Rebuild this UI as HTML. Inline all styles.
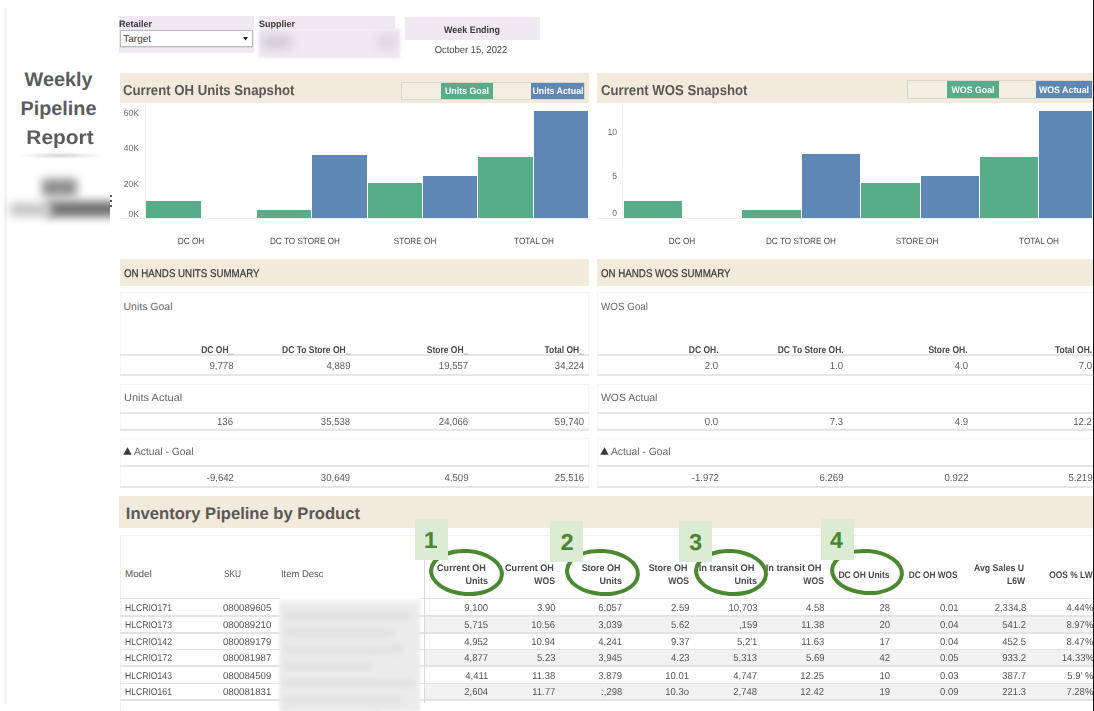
<!DOCTYPE html>
<html><head><meta charset="utf-8"><style>
html,body{margin:0;padding:0;background:#fff;width:1094px;height:711px;overflow:hidden}
body{position:relative;font-family:"Liberation Sans",sans-serif;text-rendering:geometricPrecision}
div,span,svg{position:absolute}
.t{white-space:nowrap}
</style></head><body>
<div style="left:4.0px;top:8.0px;width:2.5px;height:696.0px;background:#f5f5f5"></div>
<span class="t" style="left:-241.50px;width:600px;text-align:center;top:71px;font-size:19.8px;line-height:19.8px;color:#5a5b5e;font-weight:700;transform-origin:center center">Weekly</span>
<span class="t" style="left:-241.50px;width:600px;text-align:center;top:100px;font-size:19.8px;line-height:19.8px;color:#5a5b5e;font-weight:700;transform-origin:center center">Pipeline</span>
<span class="t" style="left:-239.70px;width:600px;text-align:center;top:129px;font-size:19.8px;line-height:19.8px;color:#5a5b5e;font-weight:700;transform:scaleX(1.055);transform-origin:center center">Report</span>
<div style="left:18.0px;top:152.0px;width:86.0px;height:7.0px;background:radial-gradient(ellipse at center,rgba(200,200,200,0.75) 0%,rgba(255,255,255,0) 70%)"></div>
<div style="left:0;top:160px;width:110px;height:80px;overflow:hidden"><div style="left:42px;top:19px;width:35px;height:17px;background:#8c8c8c;filter:blur(5px)"></div><div style="left:47px;top:41px;width:72px;height:16px;background:#737373;filter:blur(4.5px)"></div><div style="left:10px;top:43px;width:42px;height:13px;background:#c4c4c4;filter:blur(5px)"></div></div>
<div style="left:110.3px;top:194.5px;width:2.0px;height:2.0px;background:#222;border-radius:50%"></div>
<div style="left:110.3px;top:199.5px;width:2.0px;height:2.0px;background:#222;border-radius:50%"></div>
<div style="left:110.3px;top:204.5px;width:2.0px;height:2.0px;background:#222;border-radius:50%"></div>
<div style="left:119.0px;top:16.0px;width:135.0px;height:37.0px;background:#efe9f1"></div>
<span class="t" style="left:119.20px;top:20px;font-size:9.3px;line-height:9.3px;color:#3a3a3a;font-weight:700;transform:scaleX(0.97);transform-origin:left center">Retailer</span>
<div style="left:119.5px;top:30.0px;width:133.5px;height:17.0px;background:#fff;border:1px solid #bdb7bf;box-sizing:border-box;box-shadow:0 1px 1px rgba(0,0,0,0.08)"></div>
<span class="t" style="left:123.30px;top:35px;font-size:10px;line-height:10px;color:#3a3a3a;font-weight:400;transform-origin:left center">Target</span>
<svg style="position:absolute;left:243px;top:36.5px" width="5" height="4"><path d="M0 0H5L2.5 3.5Z" fill="#222"/></svg>
<div style="left:259.0px;top:16.0px;width:136.0px;height:13.0px;background:#efe9f1"></div>
<span class="t" style="left:259.00px;top:20px;font-size:9.3px;line-height:9.3px;color:#3a3a3a;font-weight:700;transform:scaleX(0.97);transform-origin:left center">Supplier</span>
<div style="left:259.0px;top:29.0px;width:141.0px;height:28.5px;background:#efe9f1;filter:blur(1px)"></div>
<div style="left:262.0px;top:35.0px;width:30.0px;height:14.0px;background:#d3ced5;filter:blur(5px)"></div>
<div style="left:377.0px;top:35.0px;width:20.0px;height:14.0px;background:#dcd7de;filter:blur(5px)"></div>
<div style="left:404.5px;top:17.4px;width:135.2px;height:22.6px;background:#efe9f1"></div>
<span class="t" style="left:172.00px;width:600px;text-align:center;top:26px;font-size:9.6px;line-height:9.6px;color:#3a3a3a;font-weight:700;transform:scaleX(0.93);transform-origin:center center">Week Ending</span>
<span class="t" style="left:171.20px;width:600px;text-align:center;top:46px;font-size:10px;line-height:10px;color:#444;font-weight:400;transform:scaleX(0.94);transform-origin:center center">October 15, 2022</span>
<div style="left:119.5px;top:73.0px;width:469.5px;height:29.5px;background:#f2eada"></div>
<span class="t" style="left:123.20px;top:84px;font-size:14.4px;line-height:14.4px;color:#58585b;font-weight:700;transform:scaleX(0.916);transform-origin:left center">Current OH Units Snapshot</span>
<div style="left:401.0px;top:82.3px;width:183.5px;height:17.5px;background:#f3eee2;border:1px solid #d9d6d0;box-sizing:border-box"></div>
<div style="left:440.8px;top:82.8px;width:52.2px;height:16.5px;background:#57ad88"></div>
<div style="left:530.6px;top:82.8px;width:53.9px;height:16.5px;background:#5f87b6"></div>
<span class="t" style="left:166.90px;width:600px;text-align:center;top:86px;font-size:9.4px;line-height:9.4px;color:#fff;font-weight:700;transform:scaleX(0.94);transform-origin:center center">Units Goal</span>
<span class="t" style="left:257.55px;width:600px;text-align:center;top:86px;font-size:9.4px;line-height:9.4px;color:#fff;font-weight:700;transform:scaleX(0.94);transform-origin:center center">Units Actual</span>
<div style="left:596.7px;top:73.0px;width:497.3px;height:29.5px;background:#f2eada"></div>
<span class="t" style="left:600.60px;top:84px;font-size:14.4px;line-height:14.4px;color:#58585b;font-weight:700;transform:scaleX(0.916);transform-origin:left center">Current WOS Snapshot</span>
<div style="left:907.3px;top:80.4px;width:184.7px;height:18.6px;background:#f3eee2;border:1px solid #d9d6d0;box-sizing:border-box"></div>
<div style="left:947.0px;top:80.9px;width:51.5px;height:17.6px;background:#57ad88"></div>
<div style="left:1036.0px;top:80.9px;width:56.0px;height:17.6px;background:#5f87b6"></div>
<span class="t" style="left:672.75px;width:600px;text-align:center;top:85px;font-size:9.4px;line-height:9.4px;color:#fff;font-weight:700;transform:scaleX(0.94);transform-origin:center center">WOS Goal</span>
<span class="t" style="left:764.00px;width:600px;text-align:center;top:85px;font-size:9.4px;line-height:9.4px;color:#fff;font-weight:700;transform:scaleX(0.94);transform-origin:center center">WOS Actual</span>
<div style="left:144.5px;top:103.0px;width:1.0px;height:115.0px;background:#f2f2f2"></div>
<div style="left:120.0px;top:218.0px;width:469.0px;height:1.0px;background:#efefef"></div>
<span class="t" style="right:954.50px;top:109px;font-size:9px;line-height:9px;color:#6a6a6a;font-weight:400;transform:scaleX(0.95);transform-origin:right center">60K</span>
<span class="t" style="right:954.50px;top:144px;font-size:9px;line-height:9px;color:#6a6a6a;font-weight:400;transform:scaleX(0.95);transform-origin:right center">40K</span>
<span class="t" style="right:954.50px;top:180px;font-size:9px;line-height:9px;color:#6a6a6a;font-weight:400;transform:scaleX(0.95);transform-origin:right center">20K</span>
<span class="t" style="right:954.50px;top:210px;font-size:9px;line-height:9px;color:#6a6a6a;font-weight:400;transform:scaleX(0.95);transform-origin:right center">0K</span>
<div style="left:146.0px;top:201.2px;width:54.6px;height:16.8px;background:#57ad88"></div>
<div style="left:256.8px;top:210.3px;width:54.6px;height:7.7px;background:#57ad88"></div>
<div style="left:312.1px;top:154.6px;width:54.6px;height:63.4px;background:#5f87b6"></div>
<div style="left:367.5px;top:183.4px;width:54.6px;height:34.6px;background:#57ad88"></div>
<div style="left:422.9px;top:175.9px;width:54.6px;height:42.1px;background:#5f87b6"></div>
<div style="left:478.2px;top:157.3px;width:54.6px;height:60.7px;background:#57ad88"></div>
<div style="left:533.6px;top:110.6px;width:54.6px;height:107.4px;background:#5f87b6"></div>
<span class="t" style="left:-109.30px;width:600px;text-align:center;top:237px;font-size:9px;line-height:9px;color:#4a4a4a;font-weight:400;transform:scaleX(0.91);transform-origin:center center">DC OH</span>
<span class="t" style="left:4.80px;width:600px;text-align:center;top:237px;font-size:9px;line-height:9px;color:#4a4a4a;font-weight:400;transform:scaleX(0.91);transform-origin:center center">DC TO STORE OH</span>
<span class="t" style="left:115.40px;width:600px;text-align:center;top:237px;font-size:9px;line-height:9px;color:#4a4a4a;font-weight:400;transform:scaleX(0.91);transform-origin:center center">STORE OH</span>
<span class="t" style="left:233.90px;width:600px;text-align:center;top:237px;font-size:9px;line-height:9px;color:#4a4a4a;font-weight:400;transform:scaleX(0.91);transform-origin:center center">TOTAL OH</span>
<div style="left:622.2px;top:103.0px;width:1.0px;height:115.0px;background:#f2f2f2"></div>
<div style="left:597.0px;top:218.0px;width:497.0px;height:1.0px;background:#efefef"></div>
<span class="t" style="right:476.50px;top:128px;font-size:9px;line-height:9px;color:#6a6a6a;font-weight:400;transform:scaleX(0.95);transform-origin:right center">10</span>
<span class="t" style="right:476.50px;top:172px;font-size:9px;line-height:9px;color:#6a6a6a;font-weight:400;transform:scaleX(0.95);transform-origin:right center">5</span>
<span class="t" style="right:476.50px;top:209px;font-size:9px;line-height:9px;color:#6a6a6a;font-weight:400;transform:scaleX(0.95);transform-origin:right center">0</span>
<div style="left:623.5px;top:201.0px;width:58.6px;height:17.0px;background:#57ad88"></div>
<div style="left:742.3px;top:210.4px;width:58.6px;height:7.6px;background:#57ad88"></div>
<div style="left:801.7px;top:154.3px;width:58.6px;height:63.7px;background:#5f87b6"></div>
<div style="left:861.1px;top:183.1px;width:58.6px;height:34.9px;background:#57ad88"></div>
<div style="left:920.5px;top:176.0px;width:58.6px;height:42.0px;background:#5f87b6"></div>
<div style="left:979.9px;top:156.9px;width:58.6px;height:61.1px;background:#57ad88"></div>
<div style="left:1039.3px;top:111.0px;width:53.2px;height:107.0px;background:#5f87b6"></div>
<span class="t" style="left:381.70px;width:600px;text-align:center;top:237px;font-size:9px;line-height:9px;color:#4a4a4a;font-weight:400;transform:scaleX(0.91);transform-origin:center center">DC OH</span>
<span class="t" style="left:500.60px;width:600px;text-align:center;top:237px;font-size:9px;line-height:9px;color:#4a4a4a;font-weight:400;transform:scaleX(0.91);transform-origin:center center">DC TO STORE OH</span>
<span class="t" style="left:616.50px;width:600px;text-align:center;top:237px;font-size:9px;line-height:9px;color:#4a4a4a;font-weight:400;transform:scaleX(0.91);transform-origin:center center">STORE OH</span>
<span class="t" style="left:739.00px;width:600px;text-align:center;top:237px;font-size:9px;line-height:9px;color:#4a4a4a;font-weight:400;transform:scaleX(0.91);transform-origin:center center">TOTAL OH</span>
<div style="left:119.5px;top:259.0px;width:469.5px;height:26.5px;background:#f2eada"></div>
<span class="t" style="left:123.70px;top:269px;font-size:11.2px;line-height:11.2px;color:#3a3a3a;font-weight:400;-webkit-text-stroke:0.25px currentColor;transform:scaleX(0.87);transform-origin:left center">ON HANDS UNITS SUMMARY</span>
<div style="left:119.5px;top:292.2px;width:469.5px;height:82.9px;border:1px solid #f6f6f6;box-sizing:border-box"></div>
<span class="t" style="left:123.50px;top:302px;font-size:10.5px;line-height:10.5px;color:#666;font-weight:400;transform-origin:left center">Units Goal</span>
<div style="left:119.5px;top:354.4px;width:469.5px;height:2.0px;background:#e6e6e6"></div>
<span class="t" style="right:860.60px;top:346px;font-size:9.9px;line-height:9.9px;color:#4a4a4a;font-weight:700;transform:scaleX(0.86);transform-origin:right center">DC OH_</span>
<span class="t" style="right:743.60px;top:346px;font-size:9.9px;line-height:9.9px;color:#4a4a4a;font-weight:700;transform:scaleX(0.86);transform-origin:right center">DC To Store OH_</span>
<span class="t" style="right:625.80px;top:346px;font-size:9.9px;line-height:9.9px;color:#4a4a4a;font-weight:700;transform:scaleX(0.86);transform-origin:right center">Store OH_</span>
<span class="t" style="right:510.00px;top:346px;font-size:9.9px;line-height:9.9px;color:#4a4a4a;font-weight:700;transform:scaleX(0.86);transform-origin:right center">Total OH_</span>
<span class="t" style="right:860.60px;top:362px;font-size:10.2px;line-height:10.2px;color:#5c5c5c;font-weight:400;transform:scaleX(0.94);transform-origin:right center">9,778</span>
<span class="t" style="right:743.60px;top:362px;font-size:10.2px;line-height:10.2px;color:#5c5c5c;font-weight:400;transform:scaleX(0.94);transform-origin:right center">4,889</span>
<span class="t" style="right:625.80px;top:362px;font-size:10.2px;line-height:10.2px;color:#5c5c5c;font-weight:400;transform:scaleX(0.94);transform-origin:right center">19,557</span>
<span class="t" style="right:510.00px;top:362px;font-size:10.2px;line-height:10.2px;color:#5c5c5c;font-weight:400;transform:scaleX(0.94);transform-origin:right center">34,224</span>
<div style="left:119.5px;top:374.1px;width:469.5px;height:2.0px;background:#e6e6e6"></div>
<div style="left:119.5px;top:383.7px;width:469.5px;height:45.8px;border:1px solid #f6f6f6;box-sizing:border-box"></div>
<span class="t" style="left:123.50px;top:393px;font-size:10.5px;line-height:10.5px;color:#666;font-weight:400;transform:scaleX(1.05);transform-origin:left center">Units Actual</span>
<div style="left:119.5px;top:411.5px;width:469.5px;height:2.0px;background:#e6e6e6"></div>
<span class="t" style="right:860.60px;top:418px;font-size:10.2px;line-height:10.2px;color:#5c5c5c;font-weight:400;transform:scaleX(0.94);transform-origin:right center">136</span>
<span class="t" style="right:743.60px;top:418px;font-size:10.2px;line-height:10.2px;color:#5c5c5c;font-weight:400;transform:scaleX(0.94);transform-origin:right center">35,538</span>
<span class="t" style="right:625.80px;top:418px;font-size:10.2px;line-height:10.2px;color:#5c5c5c;font-weight:400;transform:scaleX(0.94);transform-origin:right center">24,066</span>
<span class="t" style="right:510.00px;top:418px;font-size:10.2px;line-height:10.2px;color:#5c5c5c;font-weight:400;transform:scaleX(0.94);transform-origin:right center">59,740</span>
<div style="left:119.5px;top:428.5px;width:469.5px;height:2.0px;background:#e6e6e6"></div>
<div style="left:119.5px;top:437.6px;width:469.5px;height:49.0px;border:1px solid #f6f6f6;box-sizing:border-box"></div>
<svg style="left:123.3px;top:447.0px" width="9" height="8"><path d="M4.5 0.3L8.7 7.8H0.3Z" fill="#3a3a3a"/></svg>
<span class="t" style="left:134.00px;top:447px;font-size:10.5px;line-height:10.5px;color:#666;font-weight:400;transform:scaleX(0.98);transform-origin:left center">Actual - Goal</span>
<div style="left:119.5px;top:465.3px;width:469.5px;height:2.0px;background:#e6e6e6"></div>
<span class="t" style="right:860.60px;top:474px;font-size:10.2px;line-height:10.2px;color:#5c5c5c;font-weight:400;transform:scaleX(0.94);transform-origin:right center">-9,642</span>
<span class="t" style="right:743.60px;top:474px;font-size:10.2px;line-height:10.2px;color:#5c5c5c;font-weight:400;transform:scaleX(0.94);transform-origin:right center">30,649</span>
<span class="t" style="right:625.80px;top:474px;font-size:10.2px;line-height:10.2px;color:#5c5c5c;font-weight:400;transform:scaleX(0.94);transform-origin:right center">4,509</span>
<span class="t" style="right:510.00px;top:474px;font-size:10.2px;line-height:10.2px;color:#5c5c5c;font-weight:400;transform:scaleX(0.94);transform-origin:right center">25,516</span>
<div style="left:119.5px;top:485.6px;width:469.5px;height:2.0px;background:#e6e6e6"></div>
<div style="left:596.6px;top:259.0px;width:497.4px;height:26.5px;background:#f2eada"></div>
<span class="t" style="left:600.80px;top:269px;font-size:11.2px;line-height:11.2px;color:#3a3a3a;font-weight:400;-webkit-text-stroke:0.25px currentColor;transform:scaleX(0.87);transform-origin:left center">ON HANDS WOS SUMMARY</span>
<div style="left:596.6px;top:292.2px;width:497.4px;height:82.9px;border:1px solid #f6f6f6;box-sizing:border-box"></div>
<span class="t" style="left:600.60px;top:302px;font-size:10.5px;line-height:10.5px;color:#666;font-weight:400;transform:scaleX(0.937);transform-origin:left center">WOS Goal</span>
<div style="left:596.6px;top:354.4px;width:497.4px;height:2.0px;background:#e6e6e6"></div>
<span class="t" style="right:375.50px;top:346px;font-size:9.9px;line-height:9.9px;color:#4a4a4a;font-weight:700;transform:scaleX(0.86);transform-origin:right center">DC OH.</span>
<span class="t" style="right:250.70px;top:346px;font-size:9.9px;line-height:9.9px;color:#4a4a4a;font-weight:700;transform:scaleX(0.86);transform-origin:right center">DC To Store OH.</span>
<span class="t" style="right:126.00px;top:346px;font-size:9.9px;line-height:9.9px;color:#4a4a4a;font-weight:700;transform:scaleX(0.86);transform-origin:right center">Store OH.</span>
<span class="t" style="right:2.00px;top:346px;font-size:9.9px;line-height:9.9px;color:#4a4a4a;font-weight:700;transform:scaleX(0.86);transform-origin:right center">Total OH.</span>
<span class="t" style="right:375.50px;top:362px;font-size:10.2px;line-height:10.2px;color:#5c5c5c;font-weight:400;transform:scaleX(0.94);transform-origin:right center">2.0</span>
<span class="t" style="right:250.70px;top:362px;font-size:10.2px;line-height:10.2px;color:#5c5c5c;font-weight:400;transform:scaleX(0.94);transform-origin:right center">1.0</span>
<span class="t" style="right:126.00px;top:362px;font-size:10.2px;line-height:10.2px;color:#5c5c5c;font-weight:400;transform:scaleX(0.94);transform-origin:right center">4.0</span>
<span class="t" style="right:2.00px;top:362px;font-size:10.2px;line-height:10.2px;color:#5c5c5c;font-weight:400;transform:scaleX(0.94);transform-origin:right center">7.0</span>
<div style="left:596.6px;top:374.1px;width:497.4px;height:2.0px;background:#e6e6e6"></div>
<div style="left:596.6px;top:383.7px;width:497.4px;height:45.8px;border:1px solid #f6f6f6;box-sizing:border-box"></div>
<span class="t" style="left:600.60px;top:393px;font-size:10.5px;line-height:10.5px;color:#666;font-weight:400;transform:scaleX(0.995);transform-origin:left center">WOS Actual</span>
<div style="left:596.6px;top:411.5px;width:497.4px;height:2.0px;background:#e6e6e6"></div>
<span class="t" style="right:375.50px;top:418px;font-size:10.2px;line-height:10.2px;color:#5c5c5c;font-weight:400;transform:scaleX(0.94);transform-origin:right center">0.0</span>
<span class="t" style="right:250.70px;top:418px;font-size:10.2px;line-height:10.2px;color:#5c5c5c;font-weight:400;transform:scaleX(0.94);transform-origin:right center">7.3</span>
<span class="t" style="right:126.00px;top:418px;font-size:10.2px;line-height:10.2px;color:#5c5c5c;font-weight:400;transform:scaleX(0.94);transform-origin:right center">4.9</span>
<span class="t" style="right:2.00px;top:418px;font-size:10.2px;line-height:10.2px;color:#5c5c5c;font-weight:400;transform:scaleX(0.94);transform-origin:right center">12.2</span>
<div style="left:596.6px;top:428.5px;width:497.4px;height:2.0px;background:#e6e6e6"></div>
<div style="left:596.6px;top:437.6px;width:497.4px;height:49.0px;border:1px solid #f6f6f6;box-sizing:border-box"></div>
<svg style="left:600.4px;top:447.0px" width="9" height="8"><path d="M4.5 0.3L8.7 7.8H0.3Z" fill="#3a3a3a"/></svg>
<span class="t" style="left:611.10px;top:447px;font-size:10.5px;line-height:10.5px;color:#666;font-weight:400;transform:scaleX(0.98);transform-origin:left center">Actual - Goal</span>
<div style="left:596.6px;top:465.3px;width:497.4px;height:2.0px;background:#e6e6e6"></div>
<span class="t" style="right:375.50px;top:474px;font-size:10.2px;line-height:10.2px;color:#5c5c5c;font-weight:400;transform:scaleX(0.94);transform-origin:right center">-1.972</span>
<span class="t" style="right:250.70px;top:474px;font-size:10.2px;line-height:10.2px;color:#5c5c5c;font-weight:400;transform:scaleX(0.94);transform-origin:right center">6.269</span>
<span class="t" style="right:126.00px;top:474px;font-size:10.2px;line-height:10.2px;color:#5c5c5c;font-weight:400;transform:scaleX(0.94);transform-origin:right center">0.922</span>
<span class="t" style="right:2.00px;top:474px;font-size:10.2px;line-height:10.2px;color:#5c5c5c;font-weight:400;transform:scaleX(0.94);transform-origin:right center">5.219</span>
<div style="left:596.6px;top:485.6px;width:497.4px;height:2.0px;background:#e6e6e6"></div>
<div style="left:119.0px;top:495.5px;width:975.0px;height:32.9px;background:#f2eada"></div>
<span class="t" style="left:125.80px;top:506px;font-size:16.6px;line-height:16.6px;color:#58585b;font-weight:700;transform-origin:left center">Inventory Pipeline by Product</span>
<div style="left:120.0px;top:534.5px;width:974.0px;height:176.5px;border-left:1px solid #efefef;border-top:1px solid #f3f3f3;box-sizing:border-box"></div>
<span class="t" style="left:125.00px;top:570px;font-size:9.8px;line-height:9.8px;color:#555;font-weight:400;transform-origin:left center">Model</span>
<span class="t" style="left:223.70px;top:570px;font-size:9.8px;line-height:9.8px;color:#555;font-weight:400;transform:scaleX(0.85);transform-origin:left center">SKU</span>
<span class="t" style="left:280.60px;top:570px;font-size:9.8px;line-height:9.8px;color:#555;font-weight:400;transform:scaleX(0.96);transform-origin:left center">Item Desc</span>
<div style="left:425.0px;top:616.5px;width:668.0px;height:16.0px;background:#f2f2f2"></div>
<div style="left:425.0px;top:650.2px;width:668.0px;height:15.5px;background:#f2f2f2"></div>
<div style="left:425.0px;top:684.2px;width:668.0px;height:15.5px;background:#f2f2f2"></div>
<div style="left:120.0px;top:597.5px;width:973.0px;height:1.5px;background:#e3e3e3"></div>
<div style="left:120.0px;top:615.0px;width:973.0px;height:1.5px;background:#e3e3e3"></div>
<div style="left:120.0px;top:632.0px;width:973.0px;height:1.5px;background:#e3e3e3"></div>
<div style="left:120.0px;top:648.7px;width:973.0px;height:1.5px;background:#e3e3e3"></div>
<div style="left:120.0px;top:665.2px;width:973.0px;height:1.5px;background:#e3e3e3"></div>
<div style="left:120.0px;top:682.7px;width:973.0px;height:1.5px;background:#e3e3e3"></div>
<div style="left:120.0px;top:699.2px;width:973.0px;height:1.5px;background:#e3e3e3"></div>
<div style="left:424.2px;top:560.0px;width:1.0px;height:143.0px;background:#d9d9d9"></div>
<span class="t" style="right:608.30px;top:564px;font-size:9.6px;line-height:9.6px;color:#4a4a4a;font-weight:700;transform:scaleX(0.939925);transform-origin:right center">Current OH</span>
<span class="t" style="right:606.50px;top:577px;font-size:9.6px;line-height:9.6px;color:#4a4a4a;font-weight:700;transform:scaleX(0.938);transform-origin:right center">Units</span>
<span class="t" style="right:540.80px;top:564px;font-size:9.6px;line-height:9.6px;color:#4a4a4a;font-weight:700;transform:scaleX(0.939925);transform-origin:right center">Current OH</span>
<span class="t" style="right:539.00px;top:577px;font-size:9.6px;line-height:9.6px;color:#4a4a4a;font-weight:700;transform:scaleX(0.9);transform-origin:right center">WOS</span>
<span class="t" style="right:473.80px;top:564px;font-size:9.6px;line-height:9.6px;color:#4a4a4a;font-weight:700;transform:scaleX(0.93685);transform-origin:right center">Store OH</span>
<span class="t" style="right:472.00px;top:577px;font-size:9.6px;line-height:9.6px;color:#4a4a4a;font-weight:700;transform:scaleX(0.938);transform-origin:right center">Units</span>
<span class="t" style="right:406.90px;top:564px;font-size:9.6px;line-height:9.6px;color:#4a4a4a;font-weight:700;transform:scaleX(0.93685);transform-origin:right center">Store OH</span>
<span class="t" style="right:405.10px;top:577px;font-size:9.6px;line-height:9.6px;color:#4a4a4a;font-weight:700;transform:scaleX(0.9);transform-origin:right center">WOS</span>
<span class="t" style="right:339.10px;top:564px;font-size:9.6px;line-height:9.6px;color:#4a4a4a;font-weight:700;transform:scaleX(0.9696499999999999);transform-origin:right center">In transit OH</span>
<span class="t" style="right:337.30px;top:577px;font-size:9.6px;line-height:9.6px;color:#4a4a4a;font-weight:700;transform:scaleX(0.938);transform-origin:right center">Units</span>
<span class="t" style="right:272.30px;top:564px;font-size:9.6px;line-height:9.6px;color:#4a4a4a;font-weight:700;transform:scaleX(0.9696499999999999);transform-origin:right center">In transit OH</span>
<span class="t" style="right:270.50px;top:577px;font-size:9.6px;line-height:9.6px;color:#4a4a4a;font-weight:700;transform:scaleX(0.9);transform-origin:right center">WOS</span>
<span class="t" style="right:204.00px;top:571px;font-size:9.6px;line-height:9.6px;color:#4a4a4a;font-weight:700;transform:scaleX(0.889);transform-origin:right center">DC OH Units</span>
<span class="t" style="right:136.50px;top:571px;font-size:9.6px;line-height:9.6px;color:#4a4a4a;font-weight:700;transform:scaleX(0.861);transform-origin:right center">DC OH WOS</span>
<span class="t" style="right:70.30px;top:564px;font-size:9.6px;line-height:9.6px;color:#4a4a4a;font-weight:700;transform:scaleX(0.911225);transform-origin:right center">Avg Sales U</span>
<span class="t" style="right:68.50px;top:577px;font-size:9.6px;line-height:9.6px;color:#4a4a4a;font-weight:700;transform:scaleX(0.9);transform-origin:right center">L6W</span>
<span class="t" style="right:1.00px;top:571px;font-size:9.6px;line-height:9.6px;color:#4a4a4a;font-weight:700;transform:scaleX(0.873);transform-origin:right center">OOS % LW</span>
<span class="t" style="left:125.00px;top:604px;font-size:9.8px;line-height:9.8px;color:#555;font-weight:400;transform:scaleX(0.88);transform-origin:left center">HLCRIO171</span>
<span class="t" style="left:223.00px;top:604px;font-size:9.8px;line-height:9.8px;color:#555;font-weight:400;transform:scaleX(0.985);transform-origin:left center">080089605</span>
<span class="t" style="right:606.00px;top:604px;font-size:10px;line-height:10px;color:#555;font-weight:400;transform:scaleX(0.95);transform-origin:right center">9,100</span>
<span class="t" style="right:538.50px;top:604px;font-size:10px;line-height:10px;color:#555;font-weight:400;transform:scaleX(0.95);transform-origin:right center">3.90</span>
<span class="t" style="right:471.50px;top:604px;font-size:10px;line-height:10px;color:#555;font-weight:400;transform:scaleX(0.95);transform-origin:right center">6,057</span>
<span class="t" style="right:404.60px;top:604px;font-size:10px;line-height:10px;color:#555;font-weight:400;transform:scaleX(0.95);transform-origin:right center">2.59</span>
<span class="t" style="right:336.80px;top:604px;font-size:10px;line-height:10px;color:#555;font-weight:400;transform:scaleX(0.95);transform-origin:right center">10,703</span>
<span class="t" style="right:270.00px;top:604px;font-size:10px;line-height:10px;color:#555;font-weight:400;transform:scaleX(0.95);transform-origin:right center">4.58</span>
<span class="t" style="right:203.50px;top:604px;font-size:10px;line-height:10px;color:#555;font-weight:400;transform:scaleX(0.95);transform-origin:right center">28</span>
<span class="t" style="right:136.00px;top:604px;font-size:10px;line-height:10px;color:#555;font-weight:400;transform:scaleX(0.95);transform-origin:right center">0.01</span>
<span class="t" style="right:68.00px;top:604px;font-size:10px;line-height:10px;color:#555;font-weight:400;transform:scaleX(0.95);transform-origin:right center">2,334.8</span>
<span class="t" style="right:0.50px;top:604px;font-size:10px;line-height:10px;color:#555;font-weight:400;transform:scaleX(0.95);transform-origin:right center">4.44%</span>
<span class="t" style="left:125.00px;top:621px;font-size:9.8px;line-height:9.8px;color:#555;font-weight:400;transform:scaleX(0.88);transform-origin:left center">HLCRIO173</span>
<span class="t" style="left:223.00px;top:621px;font-size:9.8px;line-height:9.8px;color:#555;font-weight:400;transform:scaleX(0.985);transform-origin:left center">080089210</span>
<span class="t" style="right:606.00px;top:621px;font-size:10px;line-height:10px;color:#555;font-weight:400;transform:scaleX(0.95);transform-origin:right center">5,715</span>
<span class="t" style="right:538.50px;top:621px;font-size:10px;line-height:10px;color:#555;font-weight:400;transform:scaleX(0.95);transform-origin:right center">10.56</span>
<span class="t" style="right:471.50px;top:621px;font-size:10px;line-height:10px;color:#555;font-weight:400;transform:scaleX(0.95);transform-origin:right center">3,039</span>
<span class="t" style="right:404.60px;top:621px;font-size:10px;line-height:10px;color:#555;font-weight:400;transform:scaleX(0.95);transform-origin:right center">5.62</span>
<span class="t" style="right:336.80px;top:621px;font-size:10px;line-height:10px;color:#555;font-weight:400;transform:scaleX(0.95);transform-origin:right center">,159</span>
<span class="t" style="right:270.00px;top:621px;font-size:10px;line-height:10px;color:#555;font-weight:400;transform:scaleX(0.95);transform-origin:right center">11.38</span>
<span class="t" style="right:203.50px;top:621px;font-size:10px;line-height:10px;color:#555;font-weight:400;transform:scaleX(0.95);transform-origin:right center">20</span>
<span class="t" style="right:136.00px;top:621px;font-size:10px;line-height:10px;color:#555;font-weight:400;transform:scaleX(0.95);transform-origin:right center">0.04</span>
<span class="t" style="right:68.00px;top:621px;font-size:10px;line-height:10px;color:#555;font-weight:400;transform:scaleX(0.95);transform-origin:right center">541.2</span>
<span class="t" style="right:0.50px;top:621px;font-size:10px;line-height:10px;color:#555;font-weight:400;transform:scaleX(0.95);transform-origin:right center">8.97%</span>
<span class="t" style="left:125.00px;top:638px;font-size:9.8px;line-height:9.8px;color:#555;font-weight:400;transform:scaleX(0.88);transform-origin:left center">HLCRIO142</span>
<span class="t" style="left:223.00px;top:638px;font-size:9.8px;line-height:9.8px;color:#555;font-weight:400;transform:scaleX(0.985);transform-origin:left center">080089179</span>
<span class="t" style="right:606.00px;top:638px;font-size:10px;line-height:10px;color:#555;font-weight:400;transform:scaleX(0.95);transform-origin:right center">4,952</span>
<span class="t" style="right:538.50px;top:638px;font-size:10px;line-height:10px;color:#555;font-weight:400;transform:scaleX(0.95);transform-origin:right center">10.94</span>
<span class="t" style="right:471.50px;top:638px;font-size:10px;line-height:10px;color:#555;font-weight:400;transform:scaleX(0.95);transform-origin:right center">4,241</span>
<span class="t" style="right:404.60px;top:638px;font-size:10px;line-height:10px;color:#555;font-weight:400;transform:scaleX(0.95);transform-origin:right center">9.37</span>
<span class="t" style="right:336.80px;top:638px;font-size:10px;line-height:10px;color:#555;font-weight:400;transform:scaleX(0.95);transform-origin:right center">5,2&#39;1</span>
<span class="t" style="right:270.00px;top:638px;font-size:10px;line-height:10px;color:#555;font-weight:400;transform:scaleX(0.95);transform-origin:right center">11.63</span>
<span class="t" style="right:203.50px;top:638px;font-size:10px;line-height:10px;color:#555;font-weight:400;transform:scaleX(0.95);transform-origin:right center">17</span>
<span class="t" style="right:136.00px;top:638px;font-size:10px;line-height:10px;color:#555;font-weight:400;transform:scaleX(0.95);transform-origin:right center">0.04</span>
<span class="t" style="right:68.00px;top:638px;font-size:10px;line-height:10px;color:#555;font-weight:400;transform:scaleX(0.95);transform-origin:right center">452.5</span>
<span class="t" style="right:0.50px;top:638px;font-size:10px;line-height:10px;color:#555;font-weight:400;transform:scaleX(0.95);transform-origin:right center">8.47%</span>
<span class="t" style="left:125.00px;top:654px;font-size:9.8px;line-height:9.8px;color:#555;font-weight:400;transform:scaleX(0.88);transform-origin:left center">HLCRIO172</span>
<span class="t" style="left:223.00px;top:654px;font-size:9.8px;line-height:9.8px;color:#555;font-weight:400;transform:scaleX(0.985);transform-origin:left center">080081987</span>
<span class="t" style="right:606.00px;top:654px;font-size:10px;line-height:10px;color:#555;font-weight:400;transform:scaleX(0.95);transform-origin:right center">4,877</span>
<span class="t" style="right:538.50px;top:654px;font-size:10px;line-height:10px;color:#555;font-weight:400;transform:scaleX(0.95);transform-origin:right center">5.23</span>
<span class="t" style="right:471.50px;top:654px;font-size:10px;line-height:10px;color:#555;font-weight:400;transform:scaleX(0.95);transform-origin:right center">3,945</span>
<span class="t" style="right:404.60px;top:654px;font-size:10px;line-height:10px;color:#555;font-weight:400;transform:scaleX(0.95);transform-origin:right center">4.23</span>
<span class="t" style="right:336.80px;top:654px;font-size:10px;line-height:10px;color:#555;font-weight:400;transform:scaleX(0.95);transform-origin:right center">5,313</span>
<span class="t" style="right:270.00px;top:654px;font-size:10px;line-height:10px;color:#555;font-weight:400;transform:scaleX(0.95);transform-origin:right center">5.69</span>
<span class="t" style="right:203.50px;top:654px;font-size:10px;line-height:10px;color:#555;font-weight:400;transform:scaleX(0.95);transform-origin:right center">42</span>
<span class="t" style="right:136.00px;top:654px;font-size:10px;line-height:10px;color:#555;font-weight:400;transform:scaleX(0.95);transform-origin:right center">0.05</span>
<span class="t" style="right:68.00px;top:654px;font-size:10px;line-height:10px;color:#555;font-weight:400;transform:scaleX(0.95);transform-origin:right center">933.2</span>
<span class="t" style="right:0.50px;top:654px;font-size:10px;line-height:10px;color:#555;font-weight:400;transform:scaleX(0.95);transform-origin:right center">14.33%</span>
<span class="t" style="left:125.00px;top:672px;font-size:9.8px;line-height:9.8px;color:#555;font-weight:400;transform:scaleX(0.88);transform-origin:left center">HLCRIO143</span>
<span class="t" style="left:223.00px;top:672px;font-size:9.8px;line-height:9.8px;color:#555;font-weight:400;transform:scaleX(0.985);transform-origin:left center">080084509</span>
<span class="t" style="right:606.00px;top:672px;font-size:10px;line-height:10px;color:#555;font-weight:400;transform:scaleX(0.95);transform-origin:right center">4,411</span>
<span class="t" style="right:538.50px;top:672px;font-size:10px;line-height:10px;color:#555;font-weight:400;transform:scaleX(0.95);transform-origin:right center">11.38</span>
<span class="t" style="right:471.50px;top:672px;font-size:10px;line-height:10px;color:#555;font-weight:400;transform:scaleX(0.95);transform-origin:right center">3,879</span>
<span class="t" style="right:404.60px;top:672px;font-size:10px;line-height:10px;color:#555;font-weight:400;transform:scaleX(0.95);transform-origin:right center">10.01</span>
<span class="t" style="right:336.80px;top:672px;font-size:10px;line-height:10px;color:#555;font-weight:400;transform:scaleX(0.95);transform-origin:right center">4,747</span>
<span class="t" style="right:270.00px;top:672px;font-size:10px;line-height:10px;color:#555;font-weight:400;transform:scaleX(0.95);transform-origin:right center">12.25</span>
<span class="t" style="right:203.50px;top:672px;font-size:10px;line-height:10px;color:#555;font-weight:400;transform:scaleX(0.95);transform-origin:right center">10</span>
<span class="t" style="right:136.00px;top:672px;font-size:10px;line-height:10px;color:#555;font-weight:400;transform:scaleX(0.95);transform-origin:right center">0.03</span>
<span class="t" style="right:68.00px;top:672px;font-size:10px;line-height:10px;color:#555;font-weight:400;transform:scaleX(0.95);transform-origin:right center">387.7</span>
<span class="t" style="right:0.50px;top:672px;font-size:10px;line-height:10px;color:#555;font-weight:400;transform:scaleX(0.95);transform-origin:right center">5.9&#39; %</span>
<span class="t" style="left:125.00px;top:688px;font-size:9.8px;line-height:9.8px;color:#555;font-weight:400;transform:scaleX(0.88);transform-origin:left center">HLCRIO161</span>
<span class="t" style="left:223.00px;top:688px;font-size:9.8px;line-height:9.8px;color:#555;font-weight:400;transform:scaleX(0.985);transform-origin:left center">080081831</span>
<span class="t" style="right:606.00px;top:688px;font-size:10px;line-height:10px;color:#555;font-weight:400;transform:scaleX(0.95);transform-origin:right center">2,604</span>
<span class="t" style="right:538.50px;top:688px;font-size:10px;line-height:10px;color:#555;font-weight:400;transform:scaleX(0.95);transform-origin:right center">11.77</span>
<span class="t" style="right:471.50px;top:688px;font-size:10px;line-height:10px;color:#555;font-weight:400;transform:scaleX(0.95);transform-origin:right center">:,298</span>
<span class="t" style="right:404.60px;top:688px;font-size:10px;line-height:10px;color:#555;font-weight:400;transform:scaleX(0.95);transform-origin:right center">10.3o</span>
<span class="t" style="right:336.80px;top:688px;font-size:10px;line-height:10px;color:#555;font-weight:400;transform:scaleX(0.95);transform-origin:right center">2,748</span>
<span class="t" style="right:270.00px;top:688px;font-size:10px;line-height:10px;color:#555;font-weight:400;transform:scaleX(0.95);transform-origin:right center">12.42</span>
<span class="t" style="right:203.50px;top:688px;font-size:10px;line-height:10px;color:#555;font-weight:400;transform:scaleX(0.95);transform-origin:right center">19</span>
<span class="t" style="right:136.00px;top:688px;font-size:10px;line-height:10px;color:#555;font-weight:400;transform:scaleX(0.95);transform-origin:right center">0.09</span>
<span class="t" style="right:68.00px;top:688px;font-size:10px;line-height:10px;color:#555;font-weight:400;transform:scaleX(0.95);transform-origin:right center">221.3</span>
<span class="t" style="right:0.50px;top:688px;font-size:10px;line-height:10px;color:#555;font-weight:400;transform:scaleX(0.95);transform-origin:right center">7.28%</span>
<div style="left:278.5px;top:598.0px;width:141.5px;height:113.0px;background:#ececec;filter:blur(1.5px)"></div>
<div style="left:278.5px;top:596.0px;width:141.5px;height:10.0px;background:linear-gradient(#fff,rgba(255,255,255,0))"></div>
<div style="left:284.0px;top:612.5px;width:127.0px;height:6.0px;background:#dedede;filter:blur(3px)"></div>
<div style="left:284.0px;top:629.5px;width:110.0px;height:6.0px;background:#dedede;filter:blur(3px)"></div>
<div style="left:284.0px;top:646.2px;width:119.0px;height:6.0px;background:#dedede;filter:blur(3px)"></div>
<div style="left:284.0px;top:662.7px;width:88.0px;height:6.0px;background:#dedede;filter:blur(3px)"></div>
<div style="left:284.0px;top:680.2px;width:129.0px;height:6.0px;background:#dedede;filter:blur(3px)"></div>
<div style="left:284.0px;top:696.7px;width:119.0px;height:6.0px;background:#dedede;filter:blur(3px)"></div>
<div style="left:284.0px;top:713.0px;width:96.0px;height:6.0px;background:#dedede;filter:blur(3px)"></div>
<div style="left:429.3px;top:548.9px;width:75.0px;height:47.0px;border:4.2px solid #4a8932;border-radius:50%;box-sizing:border-box;transform:rotate(4deg)"></div>
<div style="left:565.0px;top:548.9px;width:75.0px;height:46.6px;border:4.2px solid #4a8932;border-radius:50%;box-sizing:border-box;transform:rotate(4deg)"></div>
<div style="left:693.8px;top:548.9px;width:74.2px;height:47.0px;border:4.2px solid #4a8932;border-radius:50%;box-sizing:border-box;transform:rotate(4deg)"></div>
<div style="left:829.7px;top:549.3px;width:74.2px;height:46.2px;border:4.2px solid #4a8932;border-radius:50%;box-sizing:border-box;transform:rotate(4deg)"></div>
<div style="left:415.0px;top:519.2px;width:32.5px;height:40.4px;background:#dcebd4"></div>
<div style="left:425.6px;top:546.2px;width:11.2px;height:2.2px;background:#488535"></div>
<span class="t" style="left:130.35px;width:600px;text-align:center;top:529px;font-size:23px;line-height:23px;color:#488535;font-weight:700;-webkit-text-stroke:0.15px currentColor;transform-origin:center center">1</span>
<div style="left:550.2px;top:520.5px;width:33.3px;height:41.0px;background:#dcebd4"></div>
<span class="t" style="left:267.15px;width:600px;text-align:center;top:531px;font-size:23px;line-height:23px;color:#488535;font-weight:700;-webkit-text-stroke:0.15px currentColor;transform-origin:center center">2</span>
<div style="left:679.0px;top:520.5px;width:32.8px;height:41.0px;background:#dcebd4"></div>
<span class="t" style="left:395.70px;width:600px;text-align:center;top:531px;font-size:23px;line-height:23px;color:#488535;font-weight:700;-webkit-text-stroke:0.15px currentColor;transform-origin:center center">3</span>
<div style="left:820.5px;top:519.0px;width:33.0px;height:40.8px;background:#dcebd4"></div>
<span class="t" style="left:536.30px;width:600px;text-align:center;top:529px;font-size:23px;line-height:23px;color:#488535;font-weight:700;-webkit-text-stroke:0.15px currentColor;transform-origin:center center">4</span>
<div style="left:1092.5px;top:0.0px;width:1.5px;height:711.0px;background:#111"></div>
</body></html>
